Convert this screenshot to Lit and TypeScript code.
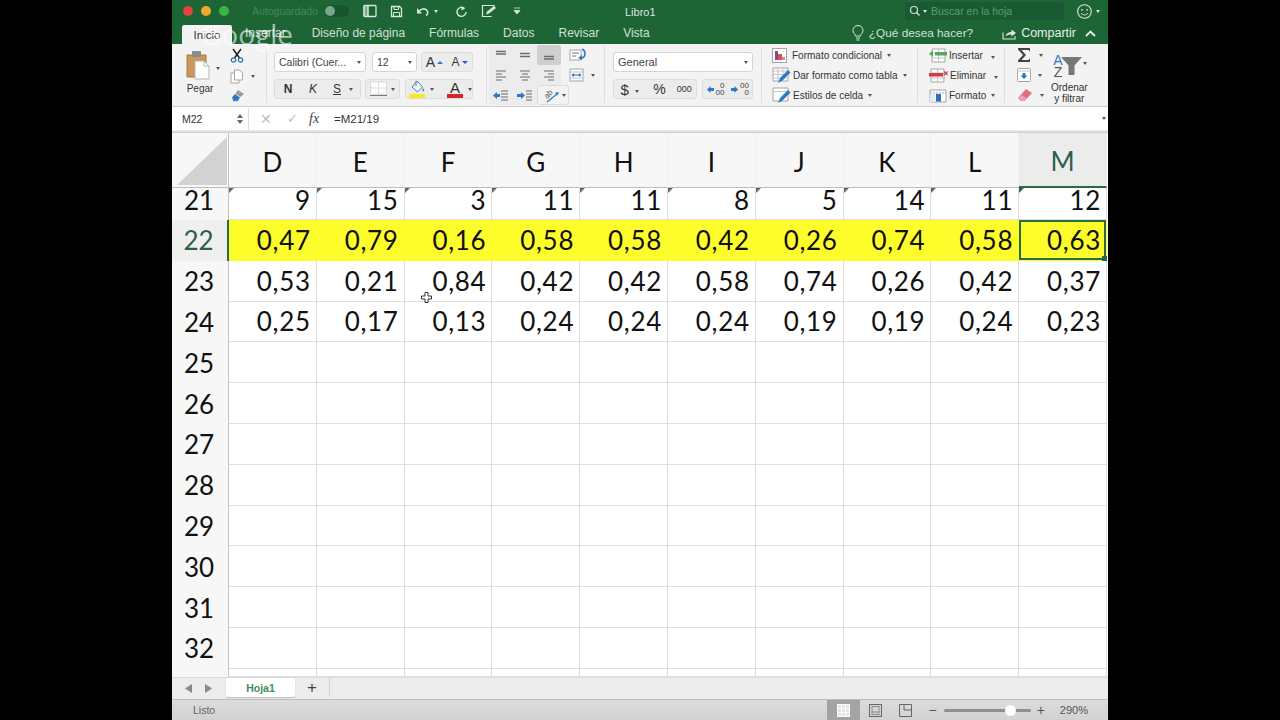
import { LitElement, html, css, svg } from 'lit';
import { customElement } from 'lit/decorators.js';

const COLS = ['D', 'E', 'F', 'G', 'H', 'I', 'J', 'K', 'L', 'M'];
const ROWS: Record<number, string[]> = {
  21: ['9', '15', '3', '11', '11', '8', '5', '14', '11', '12'],
  22: ['0,47', '0,79', '0,16', '0,58', '0,58', '0,42', '0,26', '0,74', '0,58', '0,63'],
  23: ['0,53', '0,21', '0,84', '0,42', '0,42', '0,58', '0,74', '0,26', '0,42', '0,37'],
  24: ['0,25', '0,17', '0,13', '0,24', '0,24', '0,24', '0,19', '0,19', '0,24', '0,23'],
};
const ROW_NUMBERS = [21, 22, 23, 24, 25, 26, 27, 28, 29, 30, 31, 32];

const icon = (w: number, h: number, body: unknown) =>
  html`<svg width=${w} height=${h} viewBox="0 0 ${w} ${h}" fill="none" style="display:block;flex:none">${body}</svg>`;

const caret = html`<span class="caret"></span>`;
const B = '#2f78c4';
const G = '#6d6d6d';

const icons = {
  sidebar: icon(14, 14, svg`<rect x="1" y="1.5" width="12" height="11" rx="1" stroke="#d8e6dc" stroke-width="1.3"/><path d="M5 1.5v11M1 1.5h4v11H1z" fill="#d8e6dc" fill-opacity=".5" stroke="#d8e6dc"/>`),
  save: icon(13, 13, svg`<path d="M1.5 1.5h8l2 2v8h-10z" stroke="#d8e6dc" stroke-width="1.3"/><path d="M4 1.5v3h4.5v-3M3.5 11.5v-4h6v4" stroke="#d8e6dc"/>`),
  undo: icon(14, 12, svg`<path d="M3 6.5c1.5-3 6-3.500 8-1 1.500 2 .5 4-1 5" stroke="#d8e6dc" stroke-width="1.6"/><path d="M1 3v5.500h5z" fill="#d8e6dc"/>`),
  redo: icon(13, 13, svg`<path d="M9.500 3.500A4.500 4.500 0 1 0 11 7" stroke="#d8e6dc" stroke-width="1.4"/><path d="M6.500 1l3.500 2.500-3.500 2z" fill="#d8e6dc"/>`),
  edit: icon(16, 14, svg`<path d="M13 4.500V1.500H1.500v11h9" stroke="#d8e6dc" stroke-width="1.2"/><path d="M5 10.500l1-3 7-5.500 2 2-7 5.500z" fill="#d8e6dc"/>`),
  custom: icon(8, 8, svg`<path d="M1 1h6M1 3.500h6L4 7z" stroke="#d8e6dc" fill="#d8e6dc" stroke-width=".8"/>`),
  search: icon(12, 12, svg`<circle cx="5" cy="5" r="3.500" stroke="#cfe0d4" stroke-width="1.200"/><path d="M7.500 7.500l3 3" stroke="#cfe0d4" stroke-width="1.400"/>`),
  smiley: icon(17, 17, svg`<circle cx="8.500" cy="8.500" r="6.800" stroke="#d8e6dc" stroke-width="1.100"/><circle cx="6" cy="6.800" r=".9" fill="#d8e6dc"/><circle cx="11" cy="6.800" r=".9" fill="#d8e6dc"/><path d="M5 10c1.500 2.500 5.500 2.500 7 0" stroke="#d8e6dc"/>`),
  bulb: icon(12, 16, svg`<path d="M3.500 11C3 8.500 1 8 1 5.500a5 5 0 0 1 10 0C11 8 9 8.500 8.500 11z" stroke="#d8e6dc"/><path d="M4 13h4M4.500 15h3" stroke="#d8e6dc"/>`),
  share: icon(15, 13, svg`<path d="M1 5.500v6.500h12V9" stroke="#d8e6dc" stroke-width="1.100"/><path d="M3.500 9.500c.5-3 3-4.500 6-4.500V2.500L14 6l-4.500 3.500V7.500c-2.500 0-4.500.5-6 2z" fill="#d8e6dc"/>`),
  chevron: icon(11, 7, svg`<path d="M1 6l4.500-4.500L10 6" stroke="#e6f0e9" stroke-width="1.800"/>`),
  paste: icon(24, 30, svg`<path d="M1 5h19v22H1z" fill="#c9975a" stroke="#a77a45"/><rect x="6" y="1" width="9" height="6" rx="1" fill="#8a8a8a"/><path d="M9 11h9l5 5v13H9z" fill="#fff" stroke="#b5b5b5"/><path d="M18 11v5h5" stroke="#b5b5b5"/>`),
  scissors: icon(14, 15, svg`<path d="M3 1l6.500 9M11 1L4.500 10" stroke="#222" stroke-width="1.500"/><circle cx="3.500" cy="12" r="2.200" stroke="#2f6fb5" stroke-width="1.200"/><circle cx="10.500" cy="12" r="2.200" stroke="#2f6fb5" stroke-width="1.200"/>`),
  copy: icon(14, 15, svg`<path d="M1 4h8v10H1z" fill="#fff" stroke="#a5a5a5"/><path d="M4.500 1h5l3 3v7h-8z" fill="#fff" stroke="#a5a5a5"/>`),
  brush: icon(15, 14, svg`<path d="M8 1l6 4-3.500 3-5-3.500z" fill="#9a9a9a"/><path d="M5 5l5 3.500-1.500 2.500-2 1.500-1-1-1 1-1-.5-1-1 1-.5-1-.5L2 8.500z" fill="#2f78c4"/>`),
  borders: icon(19, 16, svg`<rect x="1.500" y="1" width="16" height="12" fill="#fff" stroke="#c8c8c8" stroke-dasharray="1.500 1"/><path d="M9.500 1v12M1.500 7h16" stroke="#c8c8c8" stroke-dasharray="1.500 1"/><path d="M1 14.500h17" stroke="#777" stroke-width="1"/>`),
  fill: icon(18, 18, svg`<path d="M9 1l5.500 6-5 5L4 7z" fill="#eef3f8" stroke="#4c7fae"/><path d="M8 1v5" stroke="#4c7fae"/><path d="M15 8c1.500 2 1.500 3 .5 3.500S14 10 15 8z" fill="#4c7fae"/><rect x="1" y="14" width="16" height="4" fill="#f5ea2a"/>`),
  textA: icon(18, 18, svg`<text x="9" y="12.500" text-anchor="middle" font-family="Liberation Sans" font-size="15" fill="#333">A</text><rect x="1" y="14" width="16" height="4" fill="#d6252a"/>`),
  alignTop: icon(14, 12, svg`<path d="M2 2.500h10M2 5h10" stroke=${G} stroke-width="1.300"/>`),
  alignMid: icon(14, 12, svg`<path d="M2 4.500h10M2 7.500h10" stroke=${G} stroke-width="1.300"/>`),
  alignBot: icon(14, 12, svg`<path d="M2 7.500h10M2 10h10" stroke=${G} stroke-width="1.300"/>`),
  left: icon(14, 12, svg`<path d="M2 2h10M2 5h6M2 8h10M2 11h6" stroke=${G} stroke-width="1.100"/>`),
  center: icon(14, 12, svg`<path d="M2 2h10M4 5h6M2 8h10M4 11h6" stroke=${G} stroke-width="1.100"/>`),
  right: icon(14, 12, svg`<path d="M2 2h10M6 5h6M2 8h10M6 11h6" stroke=${G} stroke-width="1.100"/>`),
  indentL: icon(16, 12, svg`<path d="M8 2h7M8 5h7M8 8h7M8 11h7" stroke=${G}/><path d="M0 6.500l4-3.500v2h3v3H4v2z" fill=${B}/>`),
  indentR: icon(16, 12, svg`<path d="M9 2h6M9 5h6M9 8h6M9 11h6" stroke=${G}/><path d="M8 6.500L4 3v2H0v3h4v2z" fill=${B}/>`),
  orient: icon(20, 17, svg`<text x="7" y="10" text-anchor="middle" transform="rotate(-45 7 7)" font-family="Liberation Sans" font-size="8" fill="#555">ab</text><path d="M6 15L16 7" stroke=${B} stroke-width="1.300"/><path d="M18 5l-4 .8 2.300 3z" fill=${B}/>`),
  wrap: icon(18, 14, svg`<rect x="1" y="2" width="11" height="10" fill="#fff" stroke="#a5a5a5"/><path d="M3 5h7M3 8h4" stroke="#777"/><path d="M13 1c4 1.500 4 8 0 9" stroke=${B} stroke-width="1.500"/><path d="M9 10l4-3v5z" fill=${B}/>`),
  merge: icon(15, 14, svg`<rect x="1" y="1" width="13" height="12" fill="#fff" stroke="#a5a5a5"/><path d="M1 4h13M1 10h13" stroke="#c5c5c5"/><path d="M3 7h9" stroke=${B} stroke-width="1.200"/><path d="M2.500 7l2.500-2v4zM12.500 7L10 5v4z" fill=${B}/>`),
  decUp: icon(7, 7, svg`<path d="M0 3.500L3.500 0v2H7v3H3.500v2z" fill=${B}/>`),
  decDown: icon(7, 7, svg`<path d="M7 3.500L3.500 0v2H0v3h3.500v2z" fill=${B}/>`),
  condFmt: icon(15, 15, svg`<rect x=".5" y=".5" width="14" height="14" fill="#fff" stroke="#a5a5a5"/><path d="M3 3h3v9H3z" fill="#8c4a78"/><path d="M6 6h4v6H6z" fill="#d8505a"/><path d="M10 9h3v3h-3z" fill="#d88a94"/>`),
  table: icon(19, 17, svg`<path d="M1 1h15v13H1z" fill="#fff" stroke="#a5a5a5"/><path d="M1 4h15M1 7.500h15M1 11h15M6 1v13M11 1v13" stroke="#c5c5c5"/><path d="M6 16l2-5 8-8 2.500 2.500-8 8z" fill=${B}/>`),
  style: icon(19, 17, svg`<path d="M1 1h15v13H1z" fill="#fff" stroke="#a5a5a5"/><path d="M1 4.500h15" stroke="#c5c5c5"/><path d="M6 16l2-5 8-8 2.500 2.500-8 8z" fill=${B}/>`),
  insert: icon(18, 15, svg`<path d="M3 1h13v13H3z" fill="#fff" stroke="#a5a5a5"/><path d="M3 5h13M3 10h13M9.500 1v13" stroke="#c5c5c5"/><path d="M6 4h12v3.500H6z" fill="#56a85c"/><path d="M0 5.800L4 2.500v6.500z" fill="#56a85c"/>`),
  del: icon(19, 15, svg`<path d="M2 1h13v13H2z" fill="#fff" stroke="#a5a5a5"/><path d="M2 5h13M2 10h13M8.500 1v13" stroke="#c5c5c5"/><path d="M0 5h14v3.500H0z" fill="#d23c48"/><path d="M15 3.500l3.500 3.500M18.500 3.500L15 7" stroke="#d23c48" stroke-width="1.200"/>`),
  format: icon(18, 15, svg`<path d="M1 2h16v12H1z" fill="#fff" stroke="#a5a5a5"/><path d="M1 5h16" stroke="#8aa7c9" stroke-dasharray="2 1"/><path d="M1 5.500h5.500V14H1z" fill="#e4edf6"/><path d="M7 6h5v7.500H7z" fill="#2f6fb5"/>`),
  sigma: icon(15, 16, svg`<path d="M1 1h12v4l-1.200-2H4.500l4.500 5-4.500 5h7.300l1.200-2v4H1v-1.500L6 8 1 2.500z" fill="#444"/>`),
  fillDown: icon(14, 14, svg`<rect x=".5" y=".5" width="13" height="13" rx="1" fill="#fff" stroke="#a5a5a5"/><path d="M.5 3h13" stroke="#c5c5c5"/><path d="M7 11L3.500 7.500h2V5h3v2.500h2z" fill=${B}/>`),
  eraser: icon(16, 14, svg`<path d="M1 10l8-9 6 4-7.500 8H4z" fill="#e0707c"/><path d="M1 10l3 3h3.500l2-2.500-4.500-3.500z" fill="#eaa1a9"/>`),
  sort: icon(14, 30, svg`<text x="6" y="17" text-anchor="middle" font-family="Liberation Sans" font-size="14" fill=${B}>A</text><text x="6" y="29" text-anchor="middle" font-family="Liberation Sans" font-size="14" fill="#555">Z</text>`),
  funnel: icon(21, 20, svg`<path d="M0 1h21l-7.500 8.500V19h-6V9.500z" fill="#777"/>`),
  grid: icon(13, 13, svg`<rect x=".5" y=".5" width="12" height="12" fill="#e4e4e4" stroke="#fff"/><path d="M4.500 .5v12M8.500 .5v12M.5 4.500h12M.5 8.500h12" stroke="#fff"/>`),
  page: icon(13, 13, svg`<rect x=".5" y=".5" width="12" height="12" stroke="#666"/><rect x="3" y="2.500" width="7" height="8" stroke="#888"/><path d="M3 8h7" stroke="#888"/>`),
  breakView: icon(13, 13, svg`<path d="M.5 12.500V.5h12v12zM5 .5V6h7.500" stroke="#666"/>`),
  cursor: icon(11, 11, svg`<path d="M4 .5h3v3.500h3.500v3H7v3.500H4V7H.5V4H4z" fill="#fff" stroke="#333"/>`),
  triL: icon(7, 9, svg`<path d="M7 0v9L0 4.500z" fill="#8a8a8a"/>`),
  triR: icon(7, 9, svg`<path d="M0 0v9l7-4.500z" fill="#8a8a8a"/>`),
};

@customElement('app-root')
export class AppRoot extends LitElement {
  static styles = css`
    :host {
      display: block;
      width: 1280px;
      height: 720px;
      background: #000;
      font-family: 'Liberation Sans', Arial, sans-serif;
    }
    .app {
      position: relative;
      width: 936px;
      height: 720px;
      margin-left: 172px;
      display: flex;
      flex-direction: column;
      background: #fff;
      overflow: hidden;
    }
    .titlebar {
      height: 22px;
      background: #1e6536;
      display: flex;
      align-items: center;
      position: relative;
      color: #d8e6dc;
      font-size: 11px;
    }
    .lights { display: flex; gap: 8px; margin-left: 11px; }
    .light { width: 10px; height: 10px; border-radius: 50%; }
    .autosave { margin-left: 23px; font-size: 10.5px; color: #45875d; white-space: nowrap; }
    .toggle {
      margin-left: 6px;
      width: 25px;
      height: 12px;
      border-radius: 6px;
      background: #17552e;
      position: relative;
    }
    .toggle::before {
      content: '';
      position: absolute;
      left: 1px;
      top: 1px;
      width: 10px;
      height: 10px;
      border-radius: 50%;
      background: #7aa68a;
    }
    .quick { display: flex; align-items: center; margin-left: 14px; gap: 13px; }
    .doc-title { position: absolute; left: 453px; top: 6px; }
    .search {
      margin-left: auto;
      width: 159px;
      height: 18px;
      background: #1a5a32;
      border-radius: 2px;
      display: flex;
      align-items: center;
      gap: 2px;
      padding-left: 4px;
      box-sizing: border-box;
      color: #5f9a75;
      font-size: 10.5px;
    }
    .face { display: flex; align-items: center; margin: 0 8px 0 12px; gap: 3px; }
    .caret.white-caret { border-top-color: #d8e6dc; }
    .tabs {
      height: 22px;
      background: #1e6536;
      display: flex;
      align-items: center;
      gap: 24px;
      color: #cfe0d4;
      font-size: 12px;
    }
    .tab-active {
      align-self: flex-end;
      width: 50px;
      height: 19px;
      margin-left: 10px;
      margin-right: -11px;
      background: #f3f3f3;
      color: #333;
      font-size: 11.5px;
      display: flex;
      align-items: center;
      justify-content: center;
      border-radius: 2px 2px 0 0;
    }
    .tab-right { margin-left: auto; display: flex; align-items: center; }
    .what { margin: 0 29px 0 5px; font-size: 11.8px; }
    .share-text { font-size: 12.5px; color: #e6f0e9; margin-left: 4px; }
    .watermark {
      position: absolute;
      left: 29px;
      top: 15px;
      font-family: 'Open Sans', sans-serif;
      font-size: 28px;
      color: rgba(255, 255, 255, 0.6);
      pointer-events: none;
    }
    .ribbon {
      height: 62px;
      box-sizing: content-box;
      background: #f3f3f3;
      border-bottom: 1px solid #cfcfcf;
      display: flex;
      color: #333;
      font-size: 10px;
    }
    .group {
      box-sizing: border-box;
      flex: none;
      margin: 4px 0 3px;
      border-right: 1px solid #dedede;
    }
    .clip { width: 95px; display: flex; }
    .paste-col { width: 56px; display: flex; flex-direction: column; align-items: center; }
    .paste-top { display: flex; align-items: flex-end; gap: 6px; margin: 2px 0 0 6px; }
    .paste-label { margin-top: 3px; font-size: 10px; }
    .clip-col { display: flex; flex-direction: column; justify-content: space-between; align-items: flex-start; padding-left: 2px; }
    .clip-row { display: flex; align-items: center; gap: 7px; }
    .font { width: 220px; padding: 4px 0 0 7px; }
    .row { display: flex; align-items: center; }
    .row + .row { margin-top: 7px; }
    .box {
      box-sizing: border-box;
      height: 20px;
      background: #fff;
      border: 1px solid #d4d4d4;
      border-radius: 3px;
      display: flex;
      align-items: center;
      padding-left: 4px;
      font-size: 10.5px;
      color: #444;
    }
    .box .caret { margin-left: auto; margin-right: 4px; }
    .btns {
      box-sizing: border-box;
      height: 20px;
      display: flex;
      align-items: center;
      background: #ececec;
      border: 1px solid #dcdcdc;
      border-radius: 3px;
      color: #333;
    }
    .btn { display: flex; align-items: center; justify-content: center; height: 100%; }
    .caret {
      display: inline-block;
      flex: none;
      width: 0;
      height: 0;
      border-left: 2.5px solid transparent;
      border-right: 2.5px solid transparent;
      border-top: 3.5px solid #555;
    }
    .tinyup { width: 0; height: 0; border-left: 3px solid transparent; border-right: 3px solid transparent; border-bottom: 3px solid #2f78c4; margin-left: 2px; }
    .tinydown { width: 0; height: 0; border-left: 3px solid transparent; border-right: 3px solid transparent; border-top: 3px solid #2f5cc4; margin-left: 2px; }
    .align { width: 118px; display: flex; padding-left: 2px; margin-top: 1px; }
    .align-grid { display: grid; grid-template-columns: repeat(3, 24px); grid-template-rows: repeat(3, 20px); width: 72px; }
    .align-grid .btn { background: #ececec; }
    .align-grid .sel { background: #cfcfcf; border-radius: 2px; }
    .align-side { display: flex; flex-direction: column; margin-left: 8px; gap: 6px; padding-top: 3px; }
    .num { width: 157px; padding: 4px 0 0 8px; }
    .dec { font-size: 8px; line-height: 7px; color: #444; text-align: right; }
    .styles { width: 156px; padding-left: 10px; display: flex; flex-direction: column; justify-content: space-between; }
    .s-row { display: flex; align-items: center; gap: 2px; height: 20px; white-space: nowrap; }
    .s-row:first-child { margin-top: -3px; }
    .s-row:last-child { margin-bottom: -2px; }
    .s-row .caret { margin-left: 3px; }
    .cells { width: 87px; padding-left: 11px; display: flex; flex-direction: column; justify-content: space-between; }
    .edit { flex: 1; border-right: 0; display: flex; padding-left: 12px; }
    .edit-col { display: flex; flex-direction: column; justify-content: space-between; }
    .edit-row { display: flex; align-items: center; gap: 7px; height: 20px; }
    .edit-row:first-child { margin-top: -3px; }
    .edit-row:last-child { margin-bottom: -2px; }
    .sort { margin-left: 7px; display: flex; flex-direction: column; align-items: center; }
    .sort-icons { display: flex; }
    .sort-icons svg:nth-child(2) { margin: 8px 0 0 -5px; }
    .sort-label { text-align: center; line-height: 11px; margin-top: 4px; }
    .formula {
      height: 23px;
      display: flex;
      align-items: center;
      background: #fff;
      font-size: 11.5px;
      color: #333;
      box-sizing: border-box;
    }
    .name { margin-left: 10px; width: 55px; font-size: 10.5px; }
    .stepper { display: flex; flex-direction: column; gap: 2px; width: 11px; }
    .stepper i { width: 0; height: 0; border-left: 3px solid transparent; border-right: 3px solid transparent; }
    .stepper i:first-child { border-bottom: 4px solid #666; }
    .stepper i:last-child { border-top: 4px solid #666; }
    .f-div { width: 1px; height: 22px; background: #ddd; }
    .f-x { margin-left: 11px; color: #bdbdbd; font-size: 14px; width: 27px; }
    .f-check { color: #bdbdbd; font-size: 13px; width: 22px; }
    .f-fx { font-family: 'Liberation Serif', serif; font-style: italic; font-size: 14px; width: 25px; color: #444; }
    .f-end { margin-left: auto; margin-right: 2px; }
    .sep { height: 3px; background: linear-gradient(#f4f4f4, #c9c9c9); }
    .sheet {
      display: grid;
      grid-template-columns: 57px repeat(10, 87.8px);
      grid-template-rows: 55px 32px repeat(11, 40.8px) 1fr;
      height: 544px;
      font-family: Lato, 'Liberation Sans', sans-serif;
      font-size: 26px;
      color: #111;
      overflow: hidden;
    }
    .corner {
      background: #f7f7f7;
      border-right: 1px solid #c4c4c4;
      border-bottom: 1px solid #bdbdbd;
      box-sizing: border-box;
      display: flex;
      align-items: flex-end;
      justify-content: flex-end;
      padding: 0 1px 2px 0;
    }
    .head {
      background: #f7f7f7;
      border-right: 1px solid #eeeeee;
      border-bottom: 1px solid #bdbdbd;
      box-sizing: border-box;
      display: flex;
      align-items: center;
      justify-content: center;
      padding-top: 3px;
    }
    .head.on { background: #ececec; color: #2f5d4a; border-bottom: 2px solid #2a6b42; }
    .rh {
      background: #f7f7f7;
      border-right: 1px solid #c4c4c4;
      box-sizing: border-box;
      display: flex;
      align-items: center;
      justify-content: center;
      padding-right: 2px;
    }
    .rh.first { padding-bottom: 8px; }
    .rh.on { background: #efefef; color: #2f5d4a; border-right: 2px solid #2a6b42; }
    .cell {
      position: relative;
      background: #fff;
      border-right: 1px solid #dedede;
      border-bottom: 1px solid #dedede;
      box-sizing: border-box;
      display: flex;
      align-items: center;
      justify-content: flex-end;
      padding-right: 5px;
      letter-spacing: 0.7px;
      min-width: 0;
    }
    .cell.first { padding-bottom: 7px; }
    .cell.yellow { background: #fdfd2c; border-color: #fdfd2c; }
    .cell.sel { box-shadow: inset 0 0 0 2px #2a6b42; }
    .cell.sel::after {
      content: '';
      position: absolute;
      right: -1px;
      bottom: -1px;
      width: 5px;
      height: 5px;
      background: #2a6b42;
    }
    .cell.mark::before {
      content: '';
      position: absolute;
      left: 0;
      top: 0;
      border-top: 5px solid #666;
      border-right: 5px solid transparent;
    }
    .cell.mark.green::before { border-top-color: #2a6b42; }
    .cursor { position: absolute; left: 249px; top: 292px; }
    .sheet-tabs {
      height: 22px;
      background: #ececec;
      border-top: 1px solid #dcdcdc;
      box-sizing: border-box;
      display: flex;
      align-items: flex-start;
    }
    .nav { display: flex; gap: 13px; margin: 6px 0 0 13px; width: 41px; }
    .sheet-tab {
      width: 69px;
      height: 19px;
      background: #fff;
      border-radius: 0 0 2px 2px;
      box-shadow: 0 1px 1px #bbb;
      color: #3f8a5f;
      font-weight: bold;
      font-size: 10.5px;
      display: flex;
      align-items: center;
      justify-content: center;
    }
    .add { width: 34px; height: 19px; border-right: 1px solid #d4d4d4; display: flex; align-items: center; justify-content: center; font-size: 17px; color: #444; }
    .status {
      height: 21px;
      background: linear-gradient(#dcdcdc, #d2d2d2);
      border-top: 1px solid #bdbdbd;
      box-sizing: border-box;
      display: flex;
      align-items: center;
      font-size: 10.5px;
      color: #666;
    }
    .listo { margin-left: 21px; }
    .views { margin-left: auto; display: flex; align-items: center; height: 100%; }
    .view { width: 33px; height: 100%; display: flex; align-items: center; justify-content: center; }
    .view.on { background: #a3a3a3; }
    .view + .view { width: 30px; }
    .zoom { display: flex; align-items: center; margin-left: 8px; color: #555; font-size: 14px; }
    .slider { position: relative; width: 87px; height: 3px; background: #8f8f8f; border-radius: 2px; margin: 0 6px 0 7px; }
    .knob { position: absolute; left: 61px; top: -4px; width: 11px; height: 11px; border-radius: 50%; background: #fff; }
    .pct { margin: 0 20px 0 15px; font-size: 11px; color: #555; }
  `;

  private renderTitle() {
    return html`<div class="titlebar">
      <div class="lights">
        <span class="light" style="background:#e0443e"></span>
        <span class="light" style="background:#f0a830"></span>
        <span class="light" style="background:#3cb44a"></span>
      </div>
      <span class="autosave">Autoguardado</span>
      <span class="toggle"></span>
      <div class="quick">
        ${icons.sidebar}${icons.save}
        <span class="row" style="gap:4px;margin-right:4px">${icons.undo}<span class="caret white-caret"></span></span>
        ${icons.redo}${icons.edit}
        <span style="margin-left:3px">${icons.custom}</span>
      </div>
      <span class="doc-title">Libro1</span>
      <div class="search">${icons.search}<span class="caret white-caret" style="margin-right:2px"></span>Buscar en la hoja</div>
      <div class="face">${icons.smiley}<span class="caret white-caret"></span></div>
    </div>`;
  }

  private renderTabs() {
    return html`<div class="tabs">
      <div class="tab-active">Inicio</div>
      <span>Insertar</span>
      <span style="margin-left:2px">Diseño de página</span>
      <span>Fórmulas</span>
      <span>Datos</span>
      <span>Revisar</span>
      <span>Vista</span>
      <div class="tab-right">
        ${icons.bulb}<span class="what">¿Qué desea hacer?</span>
        ${icons.share}<span class="share-text">Compartir</span>
        <span style="margin:0 12px 0 9px">${icons.chevron}</span>
      </div>
    </div>`;
  }

  private renderRibbon() {
    return html`<div class="ribbon">
      <div class="group clip">
        <div class="paste-col">
          <div class="paste-top">${icons.paste}<span class="caret" style="margin-bottom:10px"></span></div>
          <span class="paste-label">Pegar</span>
        </div>
        <div class="clip-col">
          ${icons.scissors}
          <div class="clip-row">${icons.copy}${caret}</div>
          ${icons.brush}
        </div>
      </div>

      <div class="group font">
        <div class="row">
          <div class="box" style="width:92px">Calibri (Cuer...${caret}</div>
          <div class="box" style="width:45px;margin-left:6px">12${caret}</div>
          <div class="btns" style="width:52px;margin-left:4px">
            <div class="btn" style="width:26px;font-size:14px">A<span class="tinyup"></span></div>
            <div class="btn" style="width:26px;font-size:12px">A<span class="tinydown"></span></div>
          </div>
        </div>
        <div class="row">
          <div class="btns" style="width:87px;font-size:12px">
            <div class="btn" style="width:26px;font-weight:bold">N</div>
            <div class="btn" style="width:24px;font-style:italic">K</div>
            <div class="btn" style="width:24px;text-decoration:underline">S</div>
            ${caret}
          </div>
          <div class="btns" style="width:35px;margin-left:4px;gap:3px;padding-left:3px">${icons.borders}${caret}</div>
          <div class="btns" style="width:68px;margin-left:5px;gap:4px;padding-left:2px">${icons.fill}${caret}<span style="width:4px"></span>${icons.textA}${caret}</div>
        </div>
      </div>

      <div class="group align">
        <div class="align-grid">
          <div class="btn">${icons.alignTop}</div><div class="btn">${icons.alignMid}</div><div class="btn sel">${icons.alignBot}</div>
          <div class="btn">${icons.left}</div><div class="btn">${icons.center}</div><div class="btn">${icons.right}</div>
          <div class="btn">${icons.indentL}</div><div class="btn">${icons.indentR}</div>
          <div class="btn" style="width:32px;background:#f3f3f3;border:1px solid #dcdcdc;border-radius:3px;box-sizing:border-box;gap:1px">${icons.orient}${caret}</div>
        </div>
        <div class="align-side">
          ${icons.wrap}
          <div class="row" style="gap:7px;margin-top:0">${icons.merge}${caret}</div>
        </div>
      </div>

      <div class="group num">
        <div class="row">
          <div class="box" style="width:140px;font-size:11px">General${caret}</div>
        </div>
        <div class="row">
          <div class="btns" style="width:84px">
            <div class="btn" style="width:22px;font-size:15px">$</div>
            <div style="width:11px">${caret}</div>
            <div class="btn" style="width:27px;font-size:14px">%</div>
            <div class="btn" style="width:24px;font-size:9px">000</div>
          </div>
          <div class="btns" style="width:51px;margin-left:5px">
            <div class="btn" style="width:26px;gap:2px">${icons.decUp}<div class="dec">0<br />00</div></div>
            <div class="btn" style="width:25px;gap:2px">${icons.decDown}<div class="dec">00<br />0</div></div>
          </div>
        </div>
      </div>

      <div class="group styles">
        <div class="s-row">${icons.condFmt}<span style="margin-left:3px">Formato condicional</span>${caret}</div>
        <div class="s-row">${icons.table}Dar formato como tabla${caret}</div>
        <div class="s-row">${icons.style}Estilos de celda${caret}</div>
      </div>

      <div class="group cells">
        <div class="s-row">${icons.insert}Insertar<span style="margin-left:3px">${caret}</span></div>
        <div class="s-row">${icons.del}<span>Eliminar</span><span style="margin-left:3px">${caret}</span></div>
        <div class="s-row">${icons.format}Formato${caret}</div>
      </div>

      <div class="group edit">
        <div class="edit-col">
          <div class="edit-row">${icons.sigma}${caret}</div>
          <div class="edit-row">${icons.fillDown}${caret}</div>
          <div class="edit-row">${icons.eraser}${caret}</div>
        </div>
        <div class="sort">
          <div class="sort-icons">${icons.sort}${icons.funnel}<span class="caret" style="margin:14px 0 0 1px"></span></div>
          <div class="sort-label">Ordenar<br />y filtrar</div>
        </div>
      </div>
    </div>`;
  }

  private renderFormula() {
    return html`<div class="formula">
      <span class="name">M22</span>
      <span class="stepper"><i></i><i></i></span>
      <span class="f-div"></span>
      <span class="f-x">✕</span>
      <span class="f-check">✓</span>
      <span class="f-fx">fx</span>
      <span>=M21/19</span>
      <span class="caret f-end"></span>
    </div>`;
  }

  private renderSheet() {
    return html`<div class="sheet">
      <div class="corner">
        <svg width="50" height="48" viewBox="0 0 50 48"><path d="M0 48L50 0v48z" fill="#d2d2d2" /></svg>
      </div>
      ${COLS.map((c) => html`<div class="head ${c === 'M' ? 'on' : ''}">${c}</div>`)}
      ${ROW_NUMBERS.map((n) => {
        const vals = ROWS[n];
        return html`
          <div class="rh ${n === 21 ? 'first' : ''} ${n === 22 ? 'on' : ''}">${n}</div>
          ${COLS.map((c, i) => {
            const cls = [
              'cell',
              n === 21 ? 'first mark' : '',
              n === 21 && c === 'M' ? 'green' : '',
              n === 22 ? 'yellow' : '',
              n === 22 && c === 'M' ? 'sel' : '',
            ].join(' ');
            return html`<div class=${cls}>${vals ? vals[i] : ''}</div>`;
          })}
        `;
      })}
      <div class="rh"></div>
      ${COLS.map(() => html`<div class="cell"></div>`)}
    </div>`;
  }

  render() {
    return html`<div class="app">
      ${this.renderTitle()} ${this.renderTabs()} ${this.renderRibbon()} ${this.renderFormula()}
      <div class="sep"></div>
      ${this.renderSheet()}
      <div class="sheet-tabs">
        <div class="nav">${icons.triL}${icons.triR}</div>
        <div class="sheet-tab">Hoja1</div>
        <div class="add">+</div>
      </div>
      <div class="status">
        <span class="listo">Listo</span>
        <div class="views">
          <div class="view on">${icons.grid}</div>
          <div class="view">${icons.page}</div>
          <div class="view">${icons.breakView}</div>
        </div>
        <div class="zoom">
          <span>−</span>
          <div class="slider"><div class="knob"></div></div>
          <span>+</span>
        </div>
        <span class="pct">290%</span>
      </div>
      <div class="watermark">Google</div>
      <div class="cursor">${icons.cursor}</div>
    </div>`;
  }
}
